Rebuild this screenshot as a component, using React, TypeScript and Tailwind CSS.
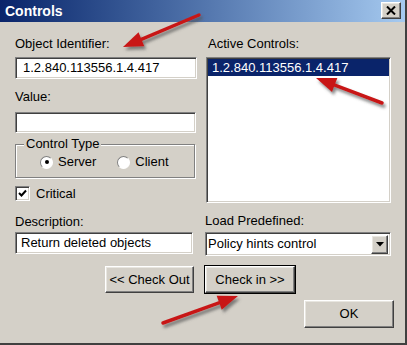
import React from 'react';

const sunken =
  'border border-t-[#808080] border-l-[#808080] border-b-white border-r-white shadow-[inset_1px_1px_0_#404040,inset_-1px_-1px_0_#d4d0c8] bg-white';
const raised =
  'border border-t-white border-l-white border-b-[#404040] border-r-[#404040] shadow-[inset_-1px_-1px_0_#808080,inset_1px_1px_0_#e8e6e0] bg-[#d4d0c8]';

function Arrow({ tail, tip }: { tail: [number, number]; tip: [number, number] }) {
  const dx = tip[0] - tail[0];
  const dy = tip[1] - tail[1];
  const len = Math.hypot(dx, dy);
  const ux = dx / len;
  const uy = dy / len;
  const bx = tip[0] - 20 * ux;
  const by = tip[1] - 20 * uy;
  const nx = -uy * 7.5;
  const ny = ux * 7.5;
  return (
    <g>
      <line x1={tail[0]} y1={tail[1]} x2={bx + 2 * ux} y2={by + 2 * uy} stroke="#c81818" strokeWidth="3.5" strokeLinecap="round" />
      <polygon points={`${tip[0]},${tip[1]} ${bx + nx},${by + ny} ${bx - nx},${by - ny}`} fill="#c81818" />
    </g>
  );
}

export default function App() {
  return (
    <div className="relative w-[407px] h-[345px] bg-[#d4d0c8] font-['Liberation_Sans',Arial,sans-serif] text-[13px] text-black overflow-hidden border-r-2 border-b-2 border-r-[#404040] border-b-[#404040]">
      {/* Title bar */}
      <div className="h-[22px] bg-gradient-to-r from-[#0a246a] to-[#a6caf0] flex items-center pl-[5px] pr-[4px]">
        <span className="text-white font-bold text-[14px] leading-none">Controls</span>
        <button className={`ml-auto mb-[2px] w-[20px] h-[17px] flex items-center justify-center ${raised}`}>
          <svg width="10" height="9" viewBox="0 0 10 9">
            <path d="M1 0.5 L9 8.5 M9 0.5 L1 8.5" stroke="#000" strokeWidth="2" />
          </svg>
        </button>
      </div>

      {/* Body */}
      <div className="flex pl-[15px] gap-[8px]">
        {/* Left column */}
        <div className="w-[182px] flex flex-col">
          <div className="mt-[14px] leading-[16px]">Object Identifier:</div>
          <div className={`mt-[5px] h-[22px] flex items-center pl-[7px] ${sunken}`}>1.2.840.113556.1.4.417</div>
          <div className="mt-[10px] leading-[16px]">Value:</div>
          <div className={`mt-[7px] h-[21px] w-[181px] ${sunken}`} />

          <div className="relative mt-[11px] h-[34px] w-[180px] border border-[#808080] shadow-[1px_1px_0_white,inset_1px_1px_0_white]">
            <span className="absolute -top-[9px] left-[8px] px-[2px] bg-[#d4d0c8] leading-[16px]">Control Type</span>
            <div className="flex items-center h-full pt-[2px] pl-[24px]">
              <span className={`w-[13px] h-[13px] rounded-full flex items-center justify-center border border-t-[#808080] border-l-[#808080] border-b-white border-r-white bg-white`}>
                <span className="w-[4px] h-[4px] rounded-full bg-black" />
              </span>
              <span className="ml-[5px]">Server</span>
              <span className="ml-[21px] w-[13px] h-[13px] rounded-full border border-t-[#808080] border-l-[#808080] border-b-white border-r-white bg-white" />
              <span className="ml-[5px]">Client</span>
            </div>
          </div>

          <div className="mt-[8px] flex items-center h-[15px]">
            <span className={`w-[15px] h-[15px] flex items-center justify-center ${sunken}`}>
              <svg width="9" height="9" viewBox="0 0 9 9">
                <path d="M1 4 L3.5 6.5 L8 1.5" stroke="#000" strokeWidth="2" fill="none" />
              </svg>
            </span>
            <span className="ml-[6px]">Critical</span>
          </div>

          <div className="mt-[13px] leading-[16px]">Description:</div>
          <div className={`mt-[2px] h-[22px] w-[178px] flex items-center pl-[5px] ${sunken}`}>Return deleted objects</div>

          <button className={`mt-[12px] self-end mr-[3px] w-[89px] h-[27px] ${raised}`}>&lt;&lt; Check Out</button>
        </div>

        {/* Right column */}
        <div className="w-[187px] flex flex-col">
          <div className="mt-[14px] pl-[3px] leading-[16px]">Active Controls:</div>
          <div className={`mt-[5px] ml-[1px] h-[146px] w-[185px] p-[1px] ${sunken}`}>
            <div className="bg-[#0a246a] text-white h-[17px] flex items-center pl-[4px]">1.2.840.113556.1.4.417</div>
          </div>
          <div className="mt-[10px] leading-[16px]">Load Predefined:</div>
          <div className={`mt-[3px] h-[24px] w-[186px] flex items-center pl-[2px] pr-[2px] ${sunken}`}>
            <span>Policy hints control</span>
            <span className={`ml-auto w-[17px] h-[19px] flex items-center justify-center ${raised}`}>
              <svg width="8" height="5" viewBox="0 0 8 5">
                <path d="M0 0 H8 L4 4.5 Z" fill="#000" />
              </svg>
            </span>
          </div>
          <button className={`mt-[10px] w-[90px] h-[27px] outline outline-1 outline-black ${raised}`}>Check in &gt;&gt;</button>
          <button className={`mt-[7px] self-end mr-[-2px] w-[90px] h-[28px] ${raised}`}>OK</button>
        </div>
      </div>

      {/* Annotation arrows */}
      <svg className="absolute inset-0 pointer-events-none" width="407" height="345">
        <defs>
          <filter id="sh" x="-20%" y="-20%" width="140%" height="160%">
            <feDropShadow dx="2" dy="3" stdDeviation="1.6" floodColor="#555" floodOpacity="0.7" />
          </filter>
        </defs>
        <g filter="url(#sh)">
          <Arrow tail={[199, 15]} tip={[123, 47]} />
          <Arrow tail={[382, 103]} tip={[316, 78]} />
          <Arrow tail={[163, 323]} tip={[238, 296]} />
        </g>
      </svg>
    </div>
  );
}
